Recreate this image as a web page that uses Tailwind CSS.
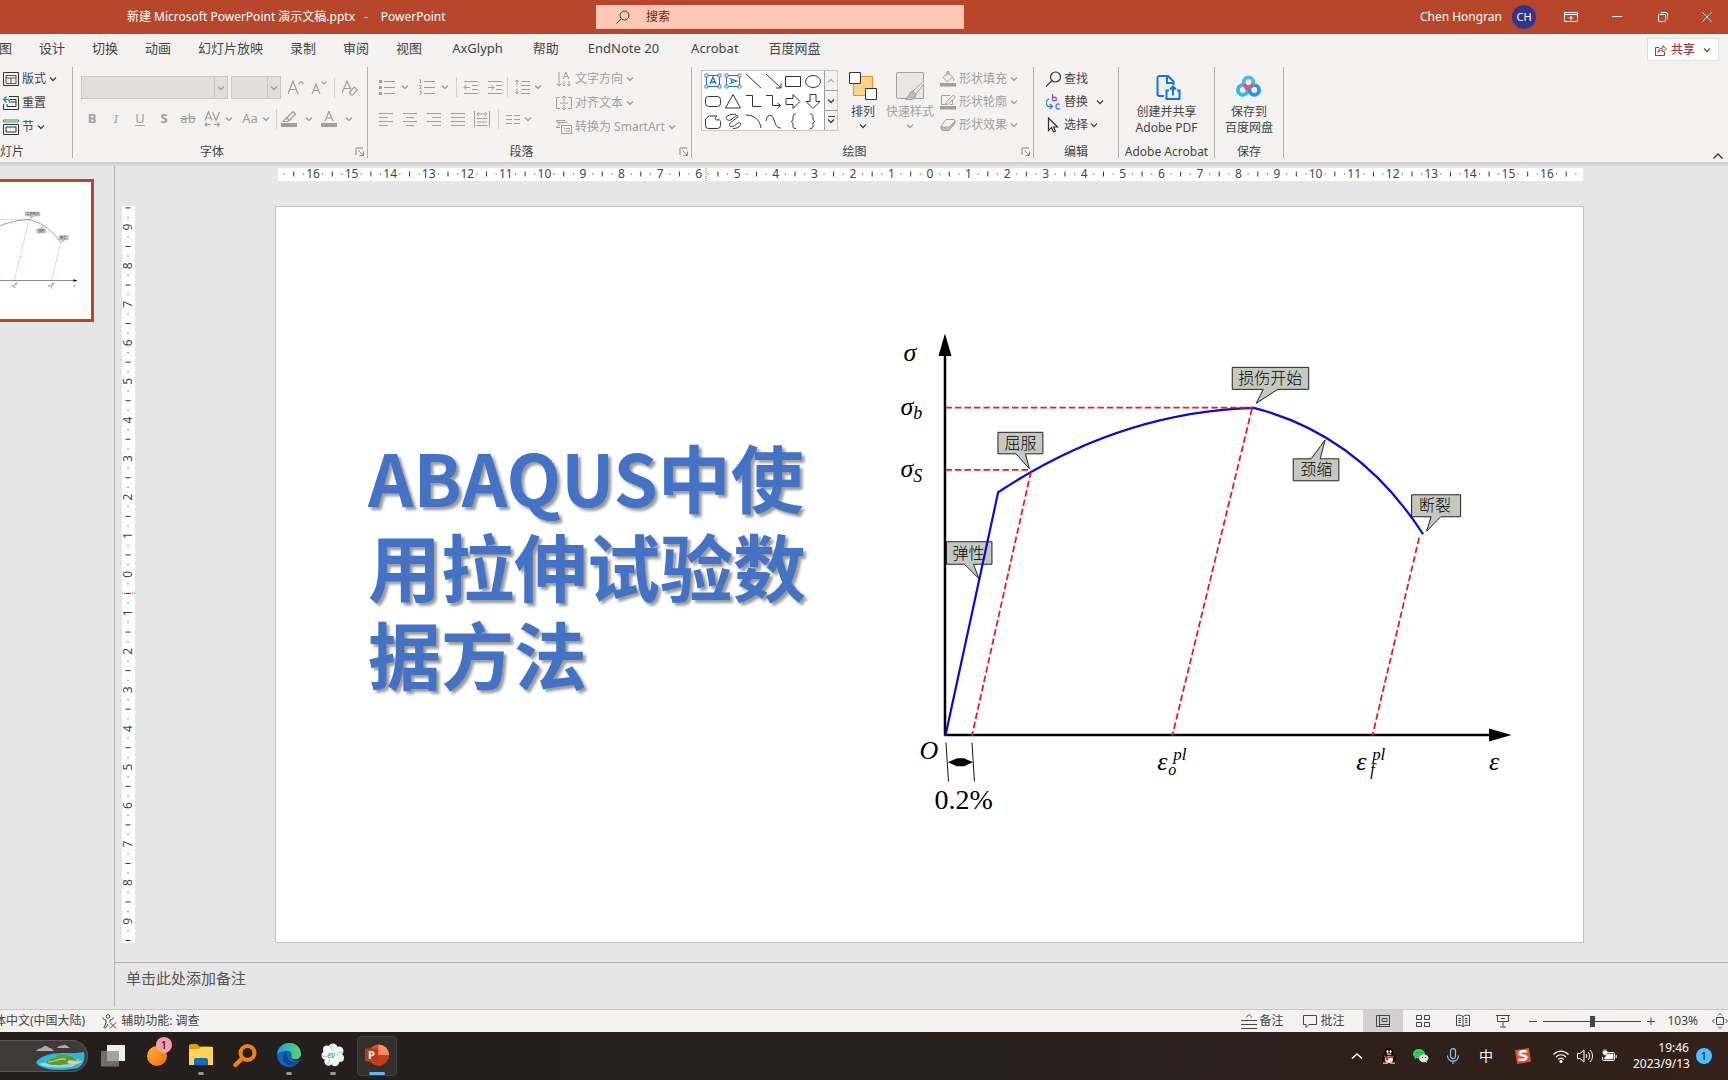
<!DOCTYPE html>
<html lang="zh-CN">
<head>
  <meta charset="UTF-8" />
  <meta name="viewport" content="width=device-width, initial-scale=1" />
  <title>新建 Microsoft PowerPoint 演示文稿.pptx - PowerPoint</title>
  <script src="https://cdn.jsdelivr.net/npm/@tailwindcss/browser@4"></script>
  <style>
    body {
      font-family: 'Noto Sans', 'Noto Sans CJK SC', sans-serif;
    }
  </style>
</head>
<body class="h-screen flex flex-col overflow-hidden bg-[#e6e6e6] text-xs text-[#444] whitespace-nowrap">

  <!-- Shared shapes -->
  <svg class="hidden">
    <symbol id="chev" viewBox="0 0 8 8"><path d="M1 2.500 4 5.500 7 2.500" fill="none" stroke="currentColor" stroke-width="1.300" /></symbol>
    <symbol id="launch" viewBox="0 0 10 10"><path d="M1 8V1h7M3.500 3.500 8 8M8.500 4.500v4h-4" fill="none" stroke="#888" /></symbol>
    <symbol id="diagram" viewBox="276 207 1308 736">
      <g fill="#c5c8be" stroke="#222" stroke-width="1">
        <path d="M1233 367.500h76.500v22h-31L1257 403.500l7-14h-31z" />
        <path d="M998.500 432.500h45v21.500h-17.500L1030 469l-13.500-15h-18z" />
        <path d="M947 542h45.500v22.500H974l5.500 14.500-14.500-14.500h-18z" />
        <path d="M1294 459h18l14-19-5 19h18.700v22H1294z" />
        <path d="M1412.500 495h49v22h-20l-14 14.500 4.500-14.500h-19.500z" />
      </g>
      <g font-family="'Noto Sans CJK SC', sans-serif" font-size="16" font-weight="300" fill="#000" text-anchor="middle">
        <text x="1271" y="384">损伤开始</text>
        <text x="1021" y="449">屈服</text>
        <text x="969" y="559">弹性</text>
        <text x="1317" y="475">颈缩</text>
        <text x="1436" y="511">断裂</text>
      </g>
      <path d="M945.500 736V350M945 735.500H1495" stroke="#000" stroke-width="2.500" />
      <path d="M945.500 333.500l6.500 22.500h-13zM1512.500 735.500l-22.500-6.500v13z" />
      <path d="M946 736 998.700 492.500Q1120 412 1254.500 408Q1360 435 1424 534.500" fill="none" stroke="#0a0ad2" stroke-width="2.200" />
      <g stroke="#e81c24" stroke-width="1.800" stroke-dasharray="6.500 3">
        <path d="M946 407.800H1254M946 470H1031M1031.500 472 972.500 736M1252.700 409 1173 736M1420 538 1373.300 736" />
      </g>
      <path d="M946.500 743 949 782M972.500 743 975 782M950 762.700h22" stroke="#111" />
      <path d="M948.500 762.700l9-4h7l9 4-9 4h-7z" />
      <g font-family="'Liberation Serif', serif" font-style="italic" font-size="26">
        <text x="904" y="361">σ</text>
        <text x="901" y="415">σ<tspan font-size="18" dy="4">b</tspan></text>
        <text x="901" y="477">σ<tspan font-size="18" dy="5">S</tspan></text>
        <text x="920" y="759">O</text>
        <text x="1158" y="770">ε</text>
        <text x="1169" y="775" font-size="16">o</text>
        <text x="1174" y="760" font-size="17">pl</text>
        <text x="1357" y="770">ε</text>
        <text x="1371" y="775" font-size="16">f</text>
        <text x="1373" y="760" font-size="17">pl</text>
        <text x="1490" y="770">ε</text>
        <text x="935" y="809" font-size="28" font-style="normal">0.2%</text>
      </g>
    </symbol>
  </svg>

  <!-- Title bar -->
  <header class="flex h-[34px] shrink-0 items-center bg-[#b7472a] text-white">
    <h1 class="w-[596px] shrink-0 pl-[127px] whitespace-pre">新建 Microsoft PowerPoint 演示文稿.pptx   -    PowerPoint</h1>
    <label class="flex h-6 w-[368px] items-center gap-4 bg-[#fdc8b5] pl-5 text-[#84191b]">
      <svg class="size-[14px]" viewBox="0 0 14 14" fill="none" stroke="currentColor"><circle cx="8.500" cy="5.500" r="4.500" /><path d="M5.300 8.700.500 13.500" /></svg>
      <input type="text" aria-label="搜索" placeholder="搜索" class="min-w-0 flex-1 bg-transparent outline-none placeholder:text-[#84191b]" />
    </label>
    <div class="flex flex-1 items-center justify-end">
      <span>Chen Hongran</span>
      <span class="mr-3 ml-[10px] flex size-6 items-center justify-center rounded-full bg-[#33348e] text-[11px]">CH</span>
      <button aria-label="功能区显示选项" class="flex h-8 w-[46px] items-center justify-center"><svg class="size-[14px]" viewBox="0 0 14 14" fill="none" stroke="currentColor"><path d="M.500 2.500h13v9H.500zM.500 4.500h13M7 10.500v-4M5 8.500l2-2 2 2" /></svg></button>
      <button aria-label="最小化" class="flex h-8 w-[46px] items-center justify-center"><svg class="size-[14px]" viewBox="0 0 14 14" stroke="currentColor"><path d="M2 6.500h10" /></svg></button>
      <button aria-label="还原" class="flex h-8 w-[46px] items-center justify-center"><svg class="size-[14px]" viewBox="0 0 14 14" fill="none" stroke="currentColor"><rect x="2.500" y="4.500" width="7" height="7" rx="1" /><path d="M4.500 2.500h5.500a1.500 1.500 0 0 1 1.500 1.500v5.500" /></svg></button>
      <button aria-label="关闭" class="flex h-8 w-[42px] items-center justify-center"><svg class="size-[14px]" viewBox="0 0 14 14" stroke="currentColor"><path d="M2.500 2.500l9 9M11.500 2.500l-9 9" /></svg></button>
    </div>
  </header>

  <!-- Ribbon tabs -->
  <nav class="flex h-[33px] shrink-0 items-start justify-between bg-[#f3f2f1] pr-[9px]">
    <div class="flex h-[30px] items-center gap-[27px] text-[13px]">
      <a href="#" class="-ml-px">图</a>
      <a href="#">设计</a>
      <a href="#">切换</a>
      <a href="#">动画</a>
      <a href="#">幻灯片放映</a>
      <a href="#">录制</a>
      <a href="#">审阅</a>
      <a href="#">视图</a>
      <a href="#" class="px-[3px]">AxGlyph</a>
      <a href="#">帮助</a>
      <a href="#" class="px-[2px]">EndNote 20</a>
      <a href="#" class="px-[3px]">Acrobat</a>
      <a href="#">百度网盘</a>
    </div>
    <button class="mt-1 flex h-[23px] w-[72px] items-center justify-center gap-1 border border-[#e1dfdd] bg-white font-medium text-[#a4373a]">
      <svg class="size-3" viewBox="0 0 12 12" fill="none" stroke="currentColor"><path d="M4 3.500H.500v8h9V8M3 8.500c0-3 2-4.500 5-4.500V1.500l3.500 3.500L8 8V6C6 6 4 6.500 3 8.500z" /></svg>
      共享
      <svg class="ml-1 size-2"><use href="#chev" /></svg>
    </button>
  </nav>

  <!-- Ribbon -->
  <div class="flex h-[95px] shrink-0 items-start bg-[#f3f2f1]">
    <!-- 幻灯片 -->
    <section class="flex h-[91px] w-[73px] shrink-0 flex-col justify-between overflow-hidden border-r border-[#b3b0ad]">
      <div class="flex flex-col pl-[3px]">
        <button class="flex h-6 items-center gap-[3px]"><svg class="size-4" viewBox="0 0 16 16" fill="none" stroke="#333"><path d="M.500 1.500h15v13H.500z" /><path d="M3 4.500h10v8H3zM3 7h10M8 7v5.500" stroke="#555" /></svg>版式<svg class="size-2"><use href="#chev" /></svg></button>
        <button class="flex h-6 items-center gap-[3px]"><svg class="size-4" viewBox="0 0 16 16" fill="none" stroke="#333"><path d="M6 1.500h9.500v13H.500V9M7 4.500h6v7H4V9M8 7h5" /><path d="M1 4.500h3.500c2 0 2.500 1.500 2.500 3.500M3.500 1.500l-3 3 3 3" stroke="#2b88d8" stroke-width="1.400" /></svg>重置</button>
        <button class="flex h-6 items-center gap-[3px]"><svg class="size-4" viewBox="0 0 16 16" fill="none" stroke="#333"><path d="M.500 1h15v2H.500z" stroke="#3a9a5c" /><path d="M.500 5.500h15v10H.500z" /><path d="M3 8h10v5H3z" /></svg>节<svg class="size-2"><use href="#chev" /></svg></button>
      </div>
      <h2 class="-ml-3 leading-3">幻灯片</h2>
    </section>

    <!-- 字体 -->
    <section class="flex h-[91px] w-[295px] shrink-0 flex-col justify-between border-r border-[#b3b0ad] text-[#a19f9d]">
      <div>
        <div class="mt-[9px] flex h-[23px] items-center gap-[7px] pl-2">
          <div class="flex h-full gap-[3px]">
            <label class="flex w-[147px] items-center border border-[#c8c6c4] bg-[#e1dfdd]"><select disabled aria-label="字体" class="h-full min-w-0 flex-1 appearance-none border-r border-[#c8c6c4]"></select><svg class="mx-[2px] size-2"><use href="#chev" /></svg></label>
            <label class="flex w-[50px] items-center border border-[#c8c6c4] bg-[#e1dfdd]"><select disabled aria-label="字号" class="h-full min-w-0 flex-1 appearance-none border-r border-[#c8c6c4]"></select><svg class="mx-[2px] size-2"><use href="#chev" /></svg></label>
          </div>
          <button disabled aria-label="增大字号"><svg class="size-4" viewBox="0 0 16 16" fill="none" stroke="currentColor" stroke-width="1.200"><path d="M0 14 5 1 10 14M1.700 9.500h6.600M10.500 4l2.500-2.500L15.500 4" /></svg></button>
          <button disabled aria-label="减小字号"><svg class="size-4" viewBox="0 0 16 16" fill="none" stroke="currentColor" stroke-width="1.200"><path d="M1 14 5 4 9 14M2.500 10.500h5M10.500 1.500 13 4l2.500-2.500" /></svg></button>
          <span class="h-5 w-px bg-[#d2d0ce]"></span>
          <button disabled aria-label="清除格式"><svg class="size-4" viewBox="0 0 16 16" fill="none" stroke="currentColor" stroke-width="1.200"><path d="M0 13 5 1 9 9.500M2 8.500h6M7.500 12l5-5 3 3-5 5H9z" /></svg></button>
        </div>
        <div class="mt-2 flex h-6 items-center pl-[7px] text-[13px]">
          <button disabled class="w-6 font-bold">B</button>
          <button disabled class="w-6 font-serif italic">I</button>
          <button disabled class="w-6 underline underline-offset-2">U</button>
          <button disabled class="w-6 font-bold">S</button>
          <button disabled class="w-6 line-through">ab</button>
          <button disabled aria-label="字符间距" class="flex w-9 items-center justify-center gap-1"><svg class="h-4 w-[17px]" viewBox="0 0 17 16" fill="none" stroke="currentColor" stroke-width="1.200"><path d="M1 9.500 4.500 1 8 9.500M2.200 7h4.600M8.500 1l3.500 8.500L15.500 1M1 13.500h6M3 11.500l-2 2 2 2M9.500 13.500h6M13.500 11.500l2 2-2 2" /></svg><svg class="size-2"><use href="#chev" /></svg></button>
          <button disabled class="flex w-10 items-center justify-center gap-1">Aa<svg class="size-2"><use href="#chev" /></svg></button>
          <span class="h-5 w-px bg-[#d2d0ce]"></span>
          <button disabled aria-label="文本突出显示颜色" class="flex w-10 items-center justify-center gap-2"><svg class="size-4" viewBox="0 0 16 16" fill="none" stroke="currentColor" stroke-width="1.200"><path d="M2 10.500 5.500 7 12 .700 14.500 3 8.500 9.500 6 10.500zM5.500 7l3 2.500" /><path d="M0 12h16v4H0z" fill="currentColor" stroke="none" /></svg><svg class="size-2"><use href="#chev" /></svg></button>
          <button disabled aria-label="字体颜色" class="flex w-10 items-center justify-center gap-2"><svg class="size-4" viewBox="0 0 16 16" fill="none" stroke="currentColor" stroke-width="1.200"><path d="M4 10 8 .500 12 10M5.300 7h5.400" /><path d="M0 12h16v4H0z" fill="currentColor" stroke="none" /></svg><svg class="size-2"><use href="#chev" /></svg></button>
        </div>
      </div>
      <div class="flex items-center justify-between pr-[2px] pl-3 text-[#444]"><span></span><h2 class="pr-4 leading-3">字体</h2><button aria-label="字体设置"><svg class="size-[10px]"><use href="#launch" /></svg></button></div>
    </section>

    <!-- 段落 -->
    <section class="flex h-[91px] w-[324px] shrink-0 flex-col justify-between border-r border-[#b3b0ad] text-[#a19f9d]">
      <div class="flex">
        <div class="w-[186px] pl-[6px]">
          <div class="mt-2 flex h-6 items-center">
            <button disabled aria-label="项目符号" class="flex w-10 items-center justify-center gap-[6px]"><svg class="size-4" viewBox="0 0 16 16" stroke="currentColor"><path d="M5 2.500h11M5 8.500h11M5 14.500h11" /><path d="M0 2.500h3M0 8.500h3M0 14.500h3" stroke-width="3" /></svg><svg class="size-2"><use href="#chev" /></svg></button>
            <button disabled aria-label="编号" class="flex w-10 items-center justify-center gap-[6px]"><svg class="size-4" viewBox="0 0 16 16" fill="none" stroke="currentColor"><path d="M5 2.500h11M5 8.500h11M5 14.500h11M.500 1l1-.500v4M.500 6.500h1.500v1.500L.500 9.500H2.500M.500 12h1.500v3.500H.500M1 13.500h1" /></svg><svg class="size-2"><use href="#chev" /></svg></button>
            <span class="mx-[2px] h-5 w-px bg-[#d2d0ce]"></span>
            <button disabled aria-label="减少缩进" class="flex w-6 justify-center"><svg class="size-4" viewBox="0 0 16 16" fill="none" stroke="currentColor"><path d="M1 2.500h14M9 6.500h6M9 10.500h6M1 14.500h14M7 8.500H1M3.500 6 1 8.500 3.500 11" /></svg></button>
            <button disabled aria-label="增加缩进" class="flex w-6 justify-center"><svg class="size-4" viewBox="0 0 16 16" fill="none" stroke="currentColor"><path d="M1 2.500h14M9 6.500h6M9 10.500h6M1 14.500h14M1 8.500h6M4.500 6 7 8.500 4.500 11" /></svg></button>
            <span class="h-5 w-px bg-[#d2d0ce]"></span>
            <button disabled aria-label="行距" class="flex w-10 items-center justify-center gap-1"><svg class="size-4" viewBox="0 0 16 16" fill="none" stroke="currentColor"><path d="M3 1v5.500M1 3l2-2 2 2M3 15V9.500M1 13l2 2 2-2M7 2.500h9M7 6.500h9M7 10.500h9M7 14.500h9" /></svg><svg class="size-2"><use href="#chev" /></svg></button>
          </div>
          <div class="mt-2 flex h-6 items-center">
            <button disabled aria-label="左对齐" class="flex w-6 justify-center"><svg class="size-[14px]" viewBox="0 0 14 14" stroke="currentColor"><path d="M0 1.500h14M0 5.500h9M0 9.500h14M0 13.500h9" /></svg></button>
            <button disabled aria-label="居中" class="flex w-6 justify-center"><svg class="size-[14px]" viewBox="0 0 14 14" stroke="currentColor"><path d="M0 1.500h14M3 5.500h8M0 9.500h14M3 13.500h8" /></svg></button>
            <button disabled aria-label="右对齐" class="flex w-6 justify-center"><svg class="size-[14px]" viewBox="0 0 14 14" stroke="currentColor"><path d="M0 1.500h14M5 5.500h9M0 9.500h14M5 13.500h9" /></svg></button>
            <button disabled aria-label="两端对齐" class="flex w-6 justify-center"><svg class="size-[14px]" viewBox="0 0 14 14" stroke="currentColor"><path d="M0 1.500h14M0 5.500h14M0 9.500h14M0 13.500h14" /></svg></button>
            <button disabled aria-label="分散对齐" class="flex w-6 justify-center"><svg class="size-4" viewBox="0 0 16 16" fill="none" stroke="currentColor"><path d="M.500 0v16M15.500 0v16M3 3h10M5 1 3 3l2 2M11 1l2 2-2 2M3 7.500h10M3 11h10M3 14.500h10" /></svg></button>
            <span class="ml-1 h-5 w-px bg-[#d2d0ce]"></span>
            <button disabled aria-label="分栏" class="flex w-10 items-center justify-center gap-1"><svg class="size-[14px]" viewBox="0 0 14 14" stroke="currentColor"><path d="M0 3.500h6M8 3.500h6M0 7.500h6M8 7.500h6M0 11.500h6M8 11.500h6" /></svg><svg class="size-2"><use href="#chev" /></svg></button>
          </div>
        </div>
        <div class="flex flex-col pl-[2px]">
          <button disabled class="flex h-6 items-center gap-[3px]"><svg class="size-4" viewBox="0 0 16 16" fill="none" stroke="currentColor"><path d="M3 1v14M.500 12.500 3 15l2.500-2.500M8 10v5M6.500 13.500 8 15l1.500-1.500M13 10v5M11.500 13.500 13 15l1.500-1.500M7 8l3-7 3 7M8 5.500h4" /></svg>文字方向<svg class="size-2"><use href="#chev" /></svg></button>
          <button disabled class="flex h-6 items-center gap-[3px]"><svg class="size-4" viewBox="0 0 16 16" fill="none" stroke="currentColor"><path d="M4 2.500H.500v11H4M12 2.500h3.500v11H12M8 1v5.500M6 3l2-2 2 2M8 15V9.500M6 13l2 2 2-2M4 8h8" /></svg>对齐文本<svg class="size-2"><use href="#chev" /></svg></button>
          <button disabled class="flex h-6 items-center gap-[3px]"><svg class="size-4" viewBox="0 0 16 16" fill="none" stroke="currentColor"><path d="M0 1.500h9l3 3M0 1.500l3.500 3.500L0 8.500h4M1 3.500h9" /><path d="M5.500 6.500h10v8h-10zM8 9.500h1M10 9.500h4M8 12h1M10 12h4" /></svg>转换为 SmartArt<svg class="size-2"><use href="#chev" /></svg></button>
        </div>
      </div>
      <div class="flex items-center justify-between pr-[2px] text-[#444]"><h2 class="flex-1 pr-1 text-center leading-3">段落</h2><button aria-label="段落设置"><svg class="size-[10px]"><use href="#launch" /></svg></button></div>
    </section>

    <!-- 绘图 -->
    <section class="flex h-[91px] w-[342px] shrink-0 flex-col justify-between border-r border-[#b3b0ad]">
      <div class="flex pl-[9px]">
        <div class="mt-[3px] flex h-[61px] w-[137px] border border-[#c8c6c4] bg-white">
          <svg class="h-[59px] w-[122px]" viewBox="0 0 122 59" fill="none" stroke="#333">
            <g stroke="#2472b8"><path d="M4.500 4.500h13v11h-13zM24.500 4.500h13v11h-13z" /><path d="M8 13 11 6l3 7M9 11h4M27.500 7.500l7 2.500-7 2.500M29.500 8v4" stroke-width="1.300" /><path d="M3 3h3v3H3zM16 3h3v3h-3zM3 14h3v3H3zM16 14h3v3h-3zM23 3h3v3h-3zM36 3h3v3h-3zM23 14h3v3h-3zM36 14h3v3h-3z" fill="#fff" stroke-width=".800" /></g>
            <path d="M44 3l15 14M64 3l15 14M79 12.500V17h-5" />
            <path d="M83.500 5.500h15v10h-15z" /><ellipse cx="111" cy="10.500" rx="7.500" ry="6" />
            <rect x="3.500" y="25.500" width="15" height="10" rx="3" /><path d="M31 23.500 38.500 37h-15z" />
            <path d="M44 24.500h6.500v11h8.500M64 24.500h6.500v10H78M75.500 32l3 2.500-3 3" />
            <path d="M84 27.500h7v-4l7 7-7 7v-4h-7zM108 23.500h6v7h4l-7 7-7-7h4z" />
            <path d="M7 45h8c-3 2-2 4 0 4 3-1 4 1 3.500 3v2.500a3 3 0 0 1-3 3H6.500a3 3 0 0 1-3-3V48z" />
            <path d="M34 43.500c-6-1-12 2-9 5s7-3 10-4c4 1-5 5-7 8-2 4 3 4 6 1s6-2 4 1c-1 2-4 3-7 3" />
            <path d="M44 44c8 0 14 5 15 13M64 50c1-7 6-8 8-1s4 8 7 8" />
            <path d="M94 43c-3 0-3 1.500-3 4s-.500 3-2 3.500c1.500.500 2 1 2 3.500s0 3.500 3 3.500M108 43c3 0 3 1.500 3 4s.500 3 2 3.500c-1.500.500-2 1-2 3.500s0 3.500-3 3.500" />
          </svg>
          <div class="flex w-[13px] flex-col divide-y divide-[#a19f9d] border-l border-[#a19f9d] bg-[#f3f2f1]">
            <button aria-label="上一行" class="flex flex-1 items-center justify-center text-[#b3b0ad]"><svg class="size-2 rotate-180"><use href="#chev" /></svg></button>
            <button aria-label="下一行" class="flex flex-1 items-center justify-center"><svg class="size-2"><use href="#chev" /></svg></button>
            <button aria-label="其他" class="flex flex-1 flex-col items-center justify-center"><span class="h-px w-[7px] bg-[#444]"></span><svg class="size-2"><use href="#chev" /></svg></button>
          </div>
        </div>
        <button class="mt-[5px] ml-1 flex w-[42px] flex-col items-center"><svg class="size-7" viewBox="0 0 28 28" stroke="#333"><path d="M4.500 4.500h19v19h-19z" fill="#fbd48b" stroke="#e8912d" /><path d="M.500.500h11v11H.500zM16.500 16.500h11v11h-11z" fill="#fff" /><path d="M12 1h4v3h-4zM1 12h3v4H1z" fill="#f3f2f1" stroke="none" /></svg><span class="mt-1 leading-4">排列</span><svg class="mt-[2px] size-2"><use href="#chev" /></svg></button>
        <button disabled class="mt-[5px] flex w-[52px] flex-col items-center text-[#a19f9d]"><svg class="size-7" viewBox="0 0 28 28" fill="#e8e7e6" stroke="#a19f9d"><rect x=".500" y=".500" width="27" height="26" rx="1.500" /><path d="M29 8 17 19l3 3 9-12z" fill="#f3f2f1" /><path d="M17 19c-4 0-3 5-8 8 5 2 11 0 11-5z" fill="#bebcba" /></svg><span class="mt-1 leading-4">快速样式</span><svg class="mt-[2px] size-2"><use href="#chev" /></svg></button>
        <div class="ml-1 flex flex-col text-[#a19f9d]">
          <button disabled class="flex h-[23px] items-center gap-[3px]"><svg class="size-4" viewBox="0 0 16 16" fill="none" stroke="currentColor"><path d="M3 6.500 8 1.500l4.500 4.500-5 5zM7 5V.500h2V4M12.500 6c1.500 1.500 1.500 3 1 4" /><path d="M0 12h16v3.500H0z" fill="currentColor" stroke="none" /></svg>形状填充<svg class="size-2"><use href="#chev" /></svg></button>
          <button disabled class="flex h-[23px] items-center gap-[3px]"><svg class="size-4" viewBox="0 0 16 16" fill="none" stroke="currentColor"><path d="M10 1.500H1.500v9H5M5.500 10.500l1-3 7-6.500 2 2-7 7zM12.500 6v4.500H10" /><path d="M0 12h16v3.500H0z" fill="currentColor" stroke="none" /></svg>形状轮廓<svg class="size-2"><use href="#chev" /></svg></button>
          <button disabled class="flex h-[23px] items-center gap-[3px]"><svg class="size-4" viewBox="0 0 16 16" stroke="currentColor"><path d="M1 9v3l2 1.500h6l6-7V4" fill="#bebcba" /><path d="M6 2.500h8.500v2L9.500 10H2L1 9z" fill="#f3f2f1" /></svg>形状效果<svg class="size-2"><use href="#chev" /></svg></button>
        </div>
      </div>
      <div class="flex items-center justify-between pr-[2px]"><h2 class="flex-1 pr-1 text-center leading-3">绘图</h2><button aria-label="绘图设置"><svg class="size-[10px]"><use href="#launch" /></svg></button></div>
    </section>

    <!-- 编辑 -->
    <section class="flex h-[91px] w-[85px] shrink-0 flex-col justify-between border-r border-[#b3b0ad]">
      <div class="flex flex-col pl-3">
        <button class="flex h-[23px] items-center gap-[2px]"><svg class="size-4" viewBox="0 0 16 16" fill="none" stroke="#333" stroke-width="1.200"><circle cx="9.500" cy="6" r="5" /><path d="M6 9.500 0 15.500" /></svg>查找</button>
        <button class="flex h-[23px] items-center gap-[2px]"><svg class="size-4" viewBox="0 0 16 16" fill="none" stroke-width="1.300"><path d="M6.500 0v7M6.500 4.500c1-2 4-1.500 4 .500s-3 2.500-4 .500" stroke="#b146c2" /><path d="M14 10.500c-3-1.500-4 .500-4 2s1.500 3.500 4 2M3 5c-3 1-4 5-1 7.500h4M4 10l2.500 2.500L4 15" stroke="#2b88d8" /></svg>替换<svg class="ml-[6px] size-2"><use href="#chev" /></svg></button>
        <button class="flex h-[23px] items-center gap-[2px]"><svg class="size-4" viewBox="0 0 16 16" fill="none" stroke="#333" stroke-width="1.200"><path d="M2.500 1v12.500L5.500 10.500l2 4.500 2-1-2-4h4z" /></svg>选择<svg class="size-2"><use href="#chev" /></svg></button>
      </div>
      <h2 class="text-center leading-3">编辑</h2>
    </section>

    <section class="flex h-[91px] w-24 shrink-0 flex-col items-center justify-between border-r border-[#b3b0ad]">
      <button class="mt-2 flex flex-col items-center leading-4"><svg class="mb-1 ml-1 size-[25px]" viewBox="0 0 25 25" fill="none" stroke="#1473e6" stroke-width="2"><path d="M8 21H3.500A2 2 0 0 1 1.500 19V3a2 2 0 0 1 2-2H12l5.500 5.500V10M11 1.500V8h6.500M13 15.500h-2.500V24h13v-8.500H21M17 20.500v-8M14 14.500l3-3 3 3" /></svg><span>创建并共享</span><span>Adobe PDF</span></button>
      <h2 class="leading-3">Adobe Acrobat</h2>
    </section>

    <section class="flex h-[91px] w-[69px] shrink-0 flex-col items-center justify-between border-r border-[#b3b0ad]">
      <button class="mt-2 flex flex-col items-center leading-4"><svg class="mb-1 size-[25px]" viewBox="0 0 26 25" fill="none" stroke-width="4"><circle cx="7" cy="15" r="5" stroke="#35b5e8" /><circle cx="19" cy="15" r="5" stroke="#2a93ee" /><circle cx="13" cy="7" r="5" stroke="#45bdea" /><path d="M8.500 8.500C9 13 17 13 17.500 8.500M9.500 11.500l2 3" stroke="#ee4f72" stroke-width="3.500" /></svg><span>保存到</span><span>百度网盘</span></button>
      <h2 class="leading-3">保存</h2>
    </section>
    <button aria-label="折叠功能区" class="mr-1 ml-auto self-end"><svg class="size-3" viewBox="0 0 12 12" fill="none" stroke="#333" stroke-width="1.300"><path d="M1.500 8.500 6 4l4.500 4.500" /></svg></button>
  </div>
  <div class="h-1 shrink-0 bg-gradient-to-b from-[#cccac9] to-[#dedede]"></div>

  <!-- Workspace -->
  <main class="flex min-h-0 flex-1 border-b border-[#c6c6c6]">
    <aside class="mb-[2px] flex w-[115px] shrink-0 items-start justify-end overflow-hidden border-r border-[#b5b5b5] pt-[13px] pr-5">
      <a href="#" aria-label="幻灯片 1" class="w-[250px] shrink-0 border-3 border-[#b7472a] bg-white"><svg class="aspect-video w-full"><use href="#diagram" /></svg></a>
    </aside>

    <div class="flex min-w-0 flex-1 flex-col">
      <div class="flex-1 pt-[2px]">
        <div class="pr-[145px] pl-[163px]"><svg id="rulerX" class="block w-full overflow-visible bg-white" viewBox="-652 0 1305 13"></svg></div>
        <div class="mt-[25px] flex items-stretch pr-36">
          <div class="ml-[7px] w-[13px] shrink-0 bg-white"><svg id="rulerY" class="h-full w-full overflow-visible" viewBox="0 -367 13 735"></svg></div>
          <article class="ml-[140px] grid flex-1 border border-[#c0c0c0] bg-white">
            <div class="col-start-1 row-start-1 pt-[224px] pl-[92px]">
              <h2 class="font-['Noto_Sans_CJK_SC',sans-serif] text-[73px]/[88px] font-bold text-[#4472c4] [text-shadow:3px_3px_3px_rgb(0_0_0/0.4)]"><span class="text-[71px]/[88px]">ABAQUS</span>中使<br />用拉伸试验数<br />据方法</h2>
            </div>
            <svg class="col-start-1 row-start-1 aspect-[1308/736] w-full"><use href="#diagram" /></svg>
          </article>
        </div>
      </div>
      <label class="flex h-[47px] shrink-0 border-t border-[#b5b5b5] pt-1 pl-[11px]">
        <input type="text" aria-label="备注" placeholder="单击此处添加备注" class="h-[22px] flex-1 bg-transparent text-[15px] outline-none placeholder:text-[#555]" />
      </label>
    </div>
  </main>

  <!-- Status bar -->
  <footer class="flex h-[22px] shrink-0 items-center bg-[#f3f2f1]">
    <span class="-ml-[6px]">体中文(中国大陆)</span>
    <button class="ml-[17px] flex items-center gap-1"><svg class="size-[15px]" viewBox="0 0 15 15" fill="none" stroke="#444"><circle cx="6" cy="2.500" r="1.800" /><path d="M1 3.500c-1 1 .500 2 3 2.500v3l-2 4.500c.500 1 1.500.500 2 0L6 10M11 3.500c1 1-.500 2-3 2.500v2M8 8.500l6 6M14 8.500l-6 6" /></svg>辅助功能: 调查</button>
    <div class="ml-auto flex h-full items-center">
      <button class="mr-5 flex items-center gap-[2px]"><svg class="size-4" viewBox="0 0 16 16" fill="none" stroke="#444"><path d="M5 4.500 8 1.500l3 3M0 7.500h16M0 11.500h16M0 15.500h16" /></svg>备注</button>
      <button class="mr-[19px] flex items-center gap-[2px]"><svg class="size-[15px]" viewBox="0 0 15 15" fill="none" stroke="#444"><path d="M.500 1.500h13v9H6l-3 3v-3H.500z" /></svg>批注</button>
      <button aria-label="普通" class="flex h-full w-10 items-center justify-center bg-[#d2d0ce]"><svg class="size-[14px]" viewBox="0 0 14 14" fill="none" stroke="#444"><path d="M.500 1.500h13v11H.500zM3.500 1.500v11M3.500 10.500h10M6 4.500h5v3H6z" /></svg></button>
      <button aria-label="幻灯片浏览" class="flex h-full w-10 items-center justify-center"><svg class="size-[14px]" viewBox="0 0 14 14" fill="none" stroke="#444"><path d="M.500 1.500h5v4h-5zM8.500 1.500h5v4h-5zM.500 8.500h5v4h-5zM8.500 8.500h5v4h-5z" /></svg></button>
      <button aria-label="阅读视图" class="flex h-full w-10 items-center justify-center"><svg class="size-[14px]" viewBox="0 0 14 14" fill="none" stroke="#444"><path d="M7 2.500C5 1 3 1 .500 1.500v10C3 11 5 11 7 12.500 9 11 11 11 13.500 11.500v-10C11 1 9 1 7 2.500zM7 2.500v10M2.500 4.500h2.500M2.500 6.500h2.500M2.500 8.500h2.500M9 4.500h2.500M9 6.500h2.500M9 8.500h2.500" /></svg></button>
      <button aria-label="幻灯片放映" class="flex h-full w-10 items-center justify-center"><svg class="size-[14px]" viewBox="0 0 14 14" fill="none" stroke="#444"><path d="M0 1.500h14M1.500 1.500v6h11v-6M7 7.500v5M4 13h6M5 4.500h4" /></svg></button>
      <button aria-label="缩小" class="flex w-5 justify-center"><svg class="size-2" viewBox="0 0 8 8" stroke="#444"><path d="M0 4.500h8" /></svg></button>
      <input type="range" aria-label="缩放" min="0" max="100" value="50" class="h-[14px] w-[98px] appearance-none bg-[linear-gradient(#444,#444)] bg-[length:100%_1px] bg-center bg-no-repeat [&::-webkit-slider-thumb]:h-[11px] [&::-webkit-slider-thumb]:w-[5px] [&::-webkit-slider-thumb]:appearance-none [&::-webkit-slider-thumb]:bg-[#444]" />
      <button aria-label="放大" class="flex w-5 justify-center"><svg class="size-2" viewBox="0 0 8 8" stroke="#444"><path d="M0 4.500h8M4 .500v8" /></svg></button>
      <button class="mr-[14px] ml-[6px]">103%</button>
      <button aria-label="适应窗口"><svg class="size-4" viewBox="0 0 16 16" fill="none" stroke="#444"><path d="M4.500 4.500h7v7h-7zM6 2.500l2-2 2 2M6 13.500l2 2 2-2M2.500 6l-2 2 2 2M13.500 6l2 2-2 2" /></svg></button>
    </div>
  </footer>

  <!-- Windows taskbar -->
  <footer class="flex h-12 shrink-0 items-center justify-between bg-gradient-to-r from-[#241f1c] via-[#251f1d] to-[#33211a] text-white">
    <div class="flex items-center">
      <button aria-label="搜索" class="mr-[3px] flex h-8 w-[88px] items-center justify-end rounded-r-full border border-l-0 border-[#5c5753] bg-[#3f3b38]">
        <svg class="h-7 w-[52px]" viewBox="0 0 52 28"><path d="M1 9c2-3 5-2 6-3 2-3 6-2 7 0 3 0 4 2 5 3zM22 6c2-3 5-2 7-3s4 2 6 3z" fill="#b7aaa8" /><path d="M1 21C4 14 16 11 28 11c9 0 16 0 21-1 2 8-2 14-6 16-14 3-36 3-42-5z" fill="#2fb4dc" /><path d="M4 22c8-3 30-2 40-5-2 5-4 7-8 8-12 1-26 1-32-3z" fill="#8adcea" /><path d="M11 21c1-4 7-5 11-5-3-2 2-4 7-3 4 0 10 2 12 5 3 1 1 4-3 4-9 0-19 3-27-1z" fill="#5f9a31" /><path d="M13 20c7 0 9-4 18-3M33 19c6-1 9 2 14 0-3 3-9 4-14 2z" stroke="#d9c68a" fill="#e8d2a2" /></svg>
      </button>
      <button aria-label="任务视图" class="flex size-11 items-center justify-center"><svg class="size-6" viewBox="0 0 24 24"><path d="M6 1h18v16H6z" fill="#efefef" /><path d="M0 7h18v15.500H0z" fill="#8b8886" fill-opacity=".75" /></svg></button>
      <button aria-label="消息" class="relative flex size-11 items-center justify-center"><svg class="size-6" viewBox="0 0 24 24"><defs><linearGradient id="ball" x1="0" y1="0" x2="1" y2="1"><stop offset="0" stop-color="#ffb52e" /><stop offset="1" stop-color="#ee6a10" /></linearGradient></defs><circle cx="12" cy="12" r="10" fill="url(#ball)" /></svg><span class="absolute top-[3px] right-[7px] flex size-4 items-center justify-center rounded-full bg-[#ff9ba6] text-[11px] text-black">1</span></button>
      <button aria-label="文件资源管理器" class="flex h-12 w-11 flex-col items-center justify-end pb-[5px]"><svg class="mb-[5px] size-6" viewBox="0 0 24 24"><path d="M0 3a2 2 0 0 1 2-2h6l2.500 2.500H22a2 2 0 0 1 2 2V8H0z" fill="#e09b10" /><path d="M0 6h10l2-2h12v18H0z" fill="#ffd258" /><path d="M5 22v-5a2 2 0 0 1 2-2h10a2 2 0 0 1 2 2v5z" fill="#0f6cbd" /></svg><span class="h-[3px] w-[6px] rounded-full bg-[#9a9694]"></span></button>
      <button aria-label="查找工具" class="flex size-11 items-center justify-center"><svg class="size-6" viewBox="0 0 24 24" fill="none" stroke="#f47f16" stroke-linecap="round"><circle cx="14.500" cy="9" r="7" stroke-width="4" /><path d="M9 14.500 2.500 21" stroke-width="4.500" /></svg></button>
      <button aria-label="Microsoft Edge" class="flex h-12 w-11 flex-col items-center justify-end pb-[5px]"><svg class="mb-1 size-[26px]" viewBox="0 0 24 24"><defs><linearGradient id="edge" x1="0" x2="1"><stop offset="0" stop-color="#1e9de2" /><stop offset="1" stop-color="#5fd668" /></linearGradient></defs><circle cx="12" cy="12" r="11" fill="#1266bd" /><path d="M1 11C2 4.500 7 1 12 1c6.500 0 11 4.500 11 9.500 0 3.500-2.500 5.500-5.500 5.500-2.500 0-4-1-3.500-2 1.500-2 .500-6-4-6-4 0-7.500 2-9 3z" fill="url(#edge)" /><path d="M10 8.500c-5 2-5 10 .500 12.500 4 1.500 8.500 0 10.500-3-4 2-12 .500-11-9.500z" fill="#0c4a93" /><path d="M14.200 13c-1 2.500 1.500 4.500 4.500 4.200 1.500 0 2.800-.600 4-1.500l.800-4.200c-1 4-4.500 4.800-6.500 4.500-2 0-3.300-1-2.800-3z" fill="#251f1d" /></svg><span class="h-[3px] w-[6px] rounded-full bg-[#9a9694]"></span></button>
      <button aria-label="EV" class="flex h-12 w-11 flex-col items-center justify-end pb-[5px]"><svg class="mb-[5px] size-6" viewBox="0 0 24 24"><g fill="#f4f7f5"><circle cx="12" cy="5" r="4.500" /><circle cx="18" cy="8" r="4.500" /><circle cx="19" cy="15" r="4" /><circle cx="14" cy="19" r="4.200" /><circle cx="7.500" cy="18.500" r="4.200" /><circle cx="4.500" cy="12.500" r="4" /><circle cx="6" cy="6.500" r="4" /><circle cx="12" cy="12" r="7" /></g><path d="M12 1c-3 2-2 5 1 7M22 10c-3-2-5 0-6 3M5 21c3 0 4-2 3-5M1 12c2 3 5 2 7 0" fill="none" stroke="#6dc79b" stroke-width=".800" /><text x="6.500" y="15" font-size="8" font-style="italic" fill="#2d98cb">ev</text></svg><span class="h-[3px] w-[6px] rounded-full bg-[#9a9694]"></span></button>
      <button aria-label="PowerPoint" class="ml-[2px] flex size-10 flex-col items-center justify-end rounded border border-[#45403d] bg-[#34302d]"><svg class="mb-[5px] size-6" viewBox="0 0 24 24"><circle cx="13.500" cy="12" r="10.500" fill="#d35230" /><path d="M13.500 1.500A10.500 10.500 0 0 1 24 12H13.500z" fill="#ff8f6b" /><path d="M3 12h21a10.500 10.500 0 0 1-21 0z" fill="#c43e1c" /><rect y="5.500" width="13" height="13" rx="1.200" fill="#b83b1d" /><text x="3" y="16" font-size="11" font-weight="700" fill="#fff">P</text></svg><span class="h-[3px] w-4 rounded-full bg-[#60b8ee]"></span></button>
    </div>
    <div class="flex items-center pr-4">
      <button aria-label="显示隐藏的图标" class="flex w-8 justify-center"><svg class="size-3" viewBox="0 0 12 12" fill="none" stroke="#fff" stroke-width="1.500"><path d="M1 8.500 6 4l5 4.500" /></svg></button>
      <button aria-label="QQ" class="flex w-8 justify-center"><svg class="size-4" viewBox="0 0 16 16"><path d="M8 0C4.500 0 3.500 2.500 3.500 6 1 8.500.500 11 1 12s1.500 0 1.500-.500C3 15 5 15.500 8 15.500s5-.500 5.500-4c0 .500 1 1.500 1.500.500s0-3.500-2.500-6C12.500 2.500 11.500 0 8 0z" fill="#080808" /><ellipse cx="8" cy="11.500" rx="4" ry="3.500" fill="#fff" /><ellipse cx="6.500" cy="3.500" rx="1" ry="1.500" fill="#fff" /><ellipse cx="9.500" cy="3.500" rx="1" ry="1.500" fill="#fff" /><path d="M5 6c2-1 4-1 6 0-1 1.500-5 1.500-6 0zM2 14.500h5V16H2zM9 14.500h5V16H9z" fill="#f5a51d" /><path d="M3 7c3 2 7 2 10 0v2c-2 1-4 1-6 1v2.500H5V9.500L3 9z" fill="#e32222" /></svg></button>
      <button aria-label="微信" class="flex w-8 justify-center"><svg class="size-4" viewBox="0 0 16 16"><path d="M6 1C2.500 1 0 3 0 6c0 1.500 1 3 2 3.500L1.500 11.500 4 10c5 1 8-1 8-4S9 1 6 1z" fill="#2bd15b" /><path d="M11 6.500c-3 0-5 1.800-5 4s2.500 4.500 6 3.500l2 1-.500-1.500c3-2 2.500-7-2.500-7z" fill="#e4e8e5" /><path d="M3.500 4.500h1M7.500 4.500h1M9 9.500h1M12 9.500h1" stroke="#2b5038" /></svg></button>
      <button aria-label="麦克风" class="flex w-8 justify-center"><svg class="size-4" viewBox="0 0 16 16" fill="none" stroke="#8ecbdd" stroke-width="1.200"><rect x="5.500" y=".600" width="5" height="10" rx="2.500" /><path d="M2.500 7.500c0 7.500 11 7.500 11 0M8 13v3" /></svg></button>
      <button class="w-[34px] text-center text-sm">中</button>
      <button aria-label="搜狗输入法" class="flex w-10 justify-center"><svg class="size-4" viewBox="0 0 16 16"><path d="M0 2 14 0l2 13.500L2 16z" fill="#e8502d" /><path d="M12 3.500c-3-.500-7-.500-7.500 2s7.500 1.500 7 4-5 2.500-8 2" fill="none" stroke="#fff" stroke-width="2.400" /></svg></button>
      <button aria-label="网络、音量和电池" class="ml-[10px] flex items-center gap-2">
        <svg class="size-4" viewBox="0 0 16 16" fill="none" stroke="#fff" stroke-width="1.200"><path d="M.500 6.500c4.500-4.500 10.500-4.500 15 0M3 9c3-3 7-3 10 0M5.300 11.500c1.800-1.800 3.600-1.800 5.400 0" /><circle cx="8" cy="13.500" r="1" fill="#fff" /></svg>
        <svg class="size-4" viewBox="0 0 16 16" fill="none" stroke="#fff"><path d="M.500 5.500v5H3l4 3.500V2L3 5.500zM9 6c1 1 1 3 0 4M11 4c2 2 2 6 0 8M13 2c3.300 3 3.300 9 0 12" /></svg>
        <svg class="size-4" viewBox="0 0 16 16" fill="none" stroke="#fff"><path d="M6 4.500h6.500a1 1 0 0 1 1 1v6a1 1 0 0 1-1 1h-10a1 1 0 0 1-1-1V9M15.200 7v3" /><path d="M6.500 6h5.500v5H3z M3 1v2M5 1v2M2 3h4v2c0 1-1 2-2 2s-2-1-2-2z" fill="#fff" stroke-width=".600" /></svg>
      </button>
      <button class="ml-4 w-14 text-right leading-4"><time class="block">19:46</time><time class="block">2023/9/13</time></button>
      <span class="ml-[7px] flex size-4 items-center justify-center rounded-full bg-[#4cc2ff] text-[11px] text-black">1</span>
    </div>
  </footer>

  <script>
    const NS = 'http://www.w3.org/2000/svg';
    const CM = 38.56; // one ruler unit

    function add(parent, tag, attrs, text) {
      const el = document.createElementNS(NS, tag);
      for (const key in attrs) el.setAttribute(key, attrs[key]);
      if (text !== undefined) el.textContent = text;
      parent.appendChild(el);
    }

    // Numbers on whole units, a dark tick on halves, a faint one on quarters
    function drawRuler(id, half, limit, vertical, cursor) {
      const svg = document.getElementById(id);
      const g = document.createElementNS(NS, 'g');
      svg.appendChild(g);
      if (vertical) g.setAttribute('transform', 'rotate(-90)');
      for (let q = -limit * 4 - 3; q <= limit * 4 + 3; q++) {
        const x = q * CM / 4;
        if (Math.abs(x) > half) continue;
        if (q % 4 === 0) {
          add(g, 'text', { x: x, y: 10, 'font-size': 12, 'text-anchor': 'middle', fill: '#444' }, Math.abs(q / 4));
        } else if (q % 2 === 0) {
          add(g, 'path', { d: `M${x} 3.500v5`, stroke: '#333' });
        } else {
          add(g, 'path', { d: `M${x} 5v2`, stroke: '#999' });
        }
      }
      add(g, 'path', { d: `M${cursor} 0v13`, stroke: '#c0504d', 'stroke-dasharray': '1 1' });
    }

    drawRuler('rulerX', 650, 16, false, -224);
    drawRuler('rulerY', 367, 9, true, -19);
  </script>
</body>
</html>
